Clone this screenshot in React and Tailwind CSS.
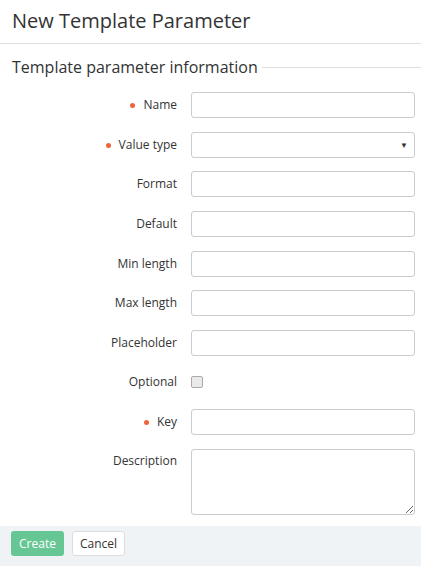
import React from "react";

const fields = [
  { label: "Name", required: true, type: "text" },
  { label: "Value type", required: true, type: "select" },
  { label: "Format", type: "text" },
  { label: "Default", type: "text" },
  { label: "Min length", type: "text" },
  { label: "Max length", type: "text" },
  { label: "Placeholder", type: "text" },
  { label: "Optional", type: "checkbox" },
  { label: "Key", required: true, type: "text" },
  { label: "Description", type: "textarea" },
];

const Label = ({ label, required, top }) => (
  <div
    className={
      "w-[177px] shrink-0 flex justify-end gap-[8px] text-[12px] text-[#333] " +
      (top ? "items-start pt-[3px]" : "items-center")
    }
  >
    {required && <span className="w-[5px] h-[5px] rounded-full bg-[#f0643c] mt-[1px]" />}
    <span>{label}</span>
  </div>
);

const Field = ({ field }) => {
  if (field.type === "select") {
    return (
      <div className="flex-1 h-[26px] border border-[#c9ccd1] rounded-[3px] bg-white flex items-center justify-end pr-[6px]">
        <span className="text-[8px] text-[#333] leading-none">▼</span>
      </div>
    );
  }
  if (field.type === "checkbox") {
    return (
      <div className="flex-1 h-[26px] flex items-center">
        <span className="w-[12px] h-[12px] rounded-[2px] border border-[#aaa] bg-[#eaeaea]" />
      </div>
    );
  }
  if (field.type === "textarea") {
    return (
      <textarea className="flex-1 h-[66px] border border-[#c9ccd1] rounded-[3px] bg-white resize-y outline-none" />
    );
  }
  return <input className="flex-1 h-[26px] border border-[#c9ccd1] rounded-[3px] bg-white outline-none" />;
};

export default function App() {
  return (
    <div className="w-[421px] h-[566px] bg-white flex flex-col overflow-hidden" style={{ fontFamily: '"Open Sans", sans-serif' }}>
      <div className="px-[12px] pt-[7px] pb-[8px] border-b border-[#dcdde0]">
        <h1 className="text-[20px] leading-[28px] text-[#333]">New Template Parameter</h1>
      </div>
      <div className="mt-[11px] flex items-center pl-[12px]">
        <span className="text-[16px] leading-[24px] text-[#333]">Template parameter information</span>
        <span className="flex-1 h-px bg-[#dcdde0] ml-[4px] mt-[1px]" />
      </div>
      <div className="flex flex-col gap-[13.625px] mt-[13px] pr-[6px]">
        {fields.map((f) => (
          <div key={f.label} className="flex gap-[14px]">
            <Label label={f.label} required={f.required} top={f.type === "textarea"} />
            <Field field={f} />
          </div>
        ))}
      </div>
      <div className="mt-auto h-[40px] bg-[#f0f3f6] flex items-start gap-[8px] px-[11px] pt-[5px]">
        <button className="h-[25px] w-[53px] rounded-[3px] bg-[#66c794] text-white text-[12px]">Create</button>
        <button className="h-[25px] w-[53px] rounded-[3px] bg-white border border-[#dcdde0] text-[#333] text-[12px]">Cancel</button>
      </div>
    </div>
  );
}
